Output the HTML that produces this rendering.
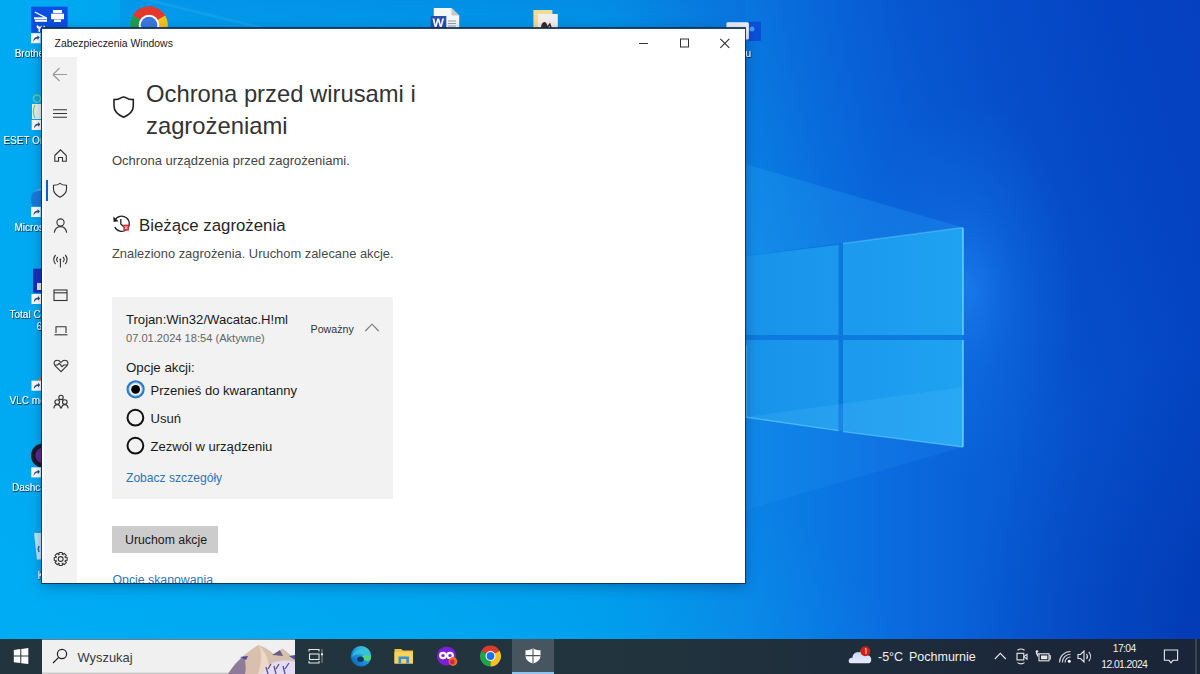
<!DOCTYPE html>
<html><head><meta charset="utf-8">
<style>
*{margin:0;padding:0;box-sizing:border-box}
html,body{width:1200px;height:674px;overflow:hidden;background:#0050c8;font-family:"Liberation Sans",sans-serif}
.abs{position:absolute}
#wall{position:absolute;left:0;top:0;width:1200px;height:674px}
#win{position:absolute;left:42px;top:28px;width:703px;height:555px;background:#fff;box-shadow:0 0 0 1px rgba(15,45,80,.85),0 3px 12px rgba(0,20,60,.35);overflow:hidden}
.t{position:absolute;white-space:nowrap;color:#000}
#taskbar{position:absolute;left:0;top:639px;width:1200px;height:35px;background:linear-gradient(90deg,#22343e 0%,#21333d 55%,#1e2d3c 72%,#1b2639 88%,#1b2539 100%)}
</style></head><body>
<svg id="wall" width="1200" height="674" viewBox="0 0 1200 674">
  <defs>
    <linearGradient id="bg" x1="0" y1="0" x2="1200" y2="0" gradientUnits="userSpaceOnUse">
      <stop offset="0" stop-color="#00aaf2"/>
      <stop offset="0.5" stop-color="#0098ea"/>
      <stop offset="0.62" stop-color="#0a84e6"/>
      <stop offset="0.75" stop-color="#0a6ade"/>
      <stop offset="0.9" stop-color="#0652cc"/>
      <stop offset="1" stop-color="#0446c2"/>
    </linearGradient>
    <radialGradient id="dark" cx="1250" cy="-180" r="660" gradientUnits="userSpaceOnUse">
      <stop offset="0" stop-color="#043cc0" stop-opacity="0.8"/>
      <stop offset="0.6" stop-color="#043cc0" stop-opacity="0.4"/>
      <stop offset="1" stop-color="#043cc0" stop-opacity="0"/>
    </radialGradient>
    <radialGradient id="glow" cx="0" cy="0" r="1" gradientUnits="userSpaceOnUse" gradientTransform="translate(968 290) scale(110 190)">
      <stop offset="0" stop-color="#2a96ff" stop-opacity="0.5"/>
      <stop offset="0.45" stop-color="#1a86f5" stop-opacity="0.22"/>
      <stop offset="1" stop-color="#1a7cf0" stop-opacity="0"/>
    </radialGradient>
    <radialGradient id="cyanbot" cx="0" cy="0" r="1" gradientUnits="userSpaceOnUse" gradientTransform="translate(300 700) scale(620 300)">
      <stop offset="0" stop-color="#00b4f6" stop-opacity="0.55"/>
      <stop offset="1" stop-color="#00b4f6" stop-opacity="0"/>
    </radialGradient>
    <radialGradient id="deepbr" cx="1260" cy="640" r="300" gradientUnits="userSpaceOnUse">
      <stop offset="0" stop-color="#0030a8" stop-opacity="0.6"/>
      <stop offset="1" stop-color="#0030a8" stop-opacity="0"/>
    </radialGradient>
    <linearGradient id="topdark" x1="0" y1="0" x2="0" y2="60" gradientUnits="userSpaceOnUse">
      <stop offset="0" stop-color="#0a60d0" stop-opacity="0.22"/>
      <stop offset="1" stop-color="#0a60d0" stop-opacity="0"/>
    </linearGradient>
    <linearGradient id="pane" x1="745" y1="0" x2="963" y2="0" gradientUnits="userSpaceOnUse">
      <stop offset="0" stop-color="#1892ea"/>
      <stop offset="1" stop-color="#1fa2f2"/>
    </linearGradient>
  </defs>
  <rect width="1200" height="674" fill="url(#bg)"/>
  <rect width="1200" height="674" fill="url(#dark)"/>
  <rect width="1200" height="674" fill="url(#glow)"/>
  <rect width="1200" height="674" fill="url(#cyanbot)"/>
  <rect x="120" y="0" width="625" height="60" fill="url(#topdark)"/>
  <rect width="1200" height="674" fill="url(#deepbr)"/>
  <!-- beams -->
  <line x1="140" y1="-2" x2="270" y2="30" stroke="#6fd0ff" stroke-opacity="0.14" stroke-width="3"/>
  <polygon points="963,227.5 745,164 745,256" fill="#30b8ff" opacity="0.2"/>
  <polygon points="963,447 745,417 745,510" fill="#38b0ff" opacity="0.12"/>
  <!-- logo panes -->
  <polygon points="745,335 963,335 963,340 745,340" fill="#0c7ade"/>
  <polygon points="838.5,244.8 843,243.5 843,431.6 838.5,430.7" fill="#0c78dc"/>
  <g fill="url(#pane)">
    <polygon points="700,262 838.5,244.8 838.5,335 700,335"/>
    <polygon points="843,243.5 963,227.5 963,335 843,335"/>
    <polygon points="700,340 838.5,340 838.5,430.7 700,411"/>
    <polygon points="843,340 963,340 963,447 843,431.6"/>
  </g>
  <polygon points="745,417 963,387 963,447 843,431.6 838.5,430.7" fill="#6ad0ff" opacity="0.14"/>
  <g fill="none" stroke="#7fe4ff" stroke-width="1.3">
    <line x1="963" y1="228" x2="963" y2="335" stroke-opacity="0.9"/>
    <line x1="963" y1="340" x2="963" y2="447" stroke-opacity="0.9"/>
    <line x1="843" y1="243.5" x2="963" y2="227.5" stroke-opacity="0.35"/>
    <line x1="843" y1="431.6" x2="963" y2="447" stroke-opacity="0.45"/>
    <line x1="745" y1="417" x2="838.5" y2="430.7" stroke-opacity="0.45"/>
    <line x1="746.5" y1="345" x2="746.5" y2="417" stroke-opacity="0.35"/>
  </g>
</svg>

<svg id="icons" class="abs" style="left:0;top:0" width="1200" height="674" viewBox="0 0 1200 674">
  <defs>
    <filter id="tsh" x="-20%" y="-20%" width="140%" height="140%"><feDropShadow dx="0.6" dy="0.8" stdDeviation="0.6" flood-color="#000" flood-opacity="0.9"/></filter>
    <g id="arrow">
      <rect x="0" y="0" width="9.5" height="10" fill="#fff"/>
      <path d="M2.3 8.8 C2.3 5.5 3.5 4 6.5 3.6 V2 L8.6 4.4 L6.5 6.8 V5.2 C4.5 5.4 3.4 6.5 2.3 8.8 Z" fill="#2a4a78"/>
    </g>
  </defs>
  <!-- Brother -->
  <rect x="31" y="6.7" width="36.6" height="26" fill="#0a4fe0"/>
  <g fill="#fff">
    <path d="M35 11.5 L46 17 L45 18 L34.5 12.5 Z"/>
    <rect x="34" y="17.3" width="13" height="2"/>
    <rect x="35" y="19.8" width="12" height="2"/>
    <rect x="53" y="10" width="9" height="3.2"/>
    <rect x="51" y="13.7" width="13" height="5.5"/>
    <rect x="54" y="19.5" width="7" height="2.5"/>
    <path d="M37 25 C36 27 37 28.5 38.5 28.8 V32 H40 V28.8 C41.5 28.5 42 27 41.5 25.5 L40 27 L38.5 26 Z"/>
    <path d="M44 25 L45.5 28 L43 28 Z"/>
  </g>
  <use href="#arrow" x="31" y="33.2"/>
  <!-- ESET -->
  <circle cx="37" cy="98.6" r="3.6" fill="none" stroke="#6acb9a" stroke-width="1.5"/>
  <rect x="32" y="104" width="10" height="15" fill="#e9f2ee"/>
  <path d="M35 105 C33 109 33 114 35 118" stroke="#6acb9a" stroke-width="1.2" fill="none"/>
  <use href="#arrow" x="31.7" y="120"/>
  <!-- Micro(soft Edge) -->
  <path d="M42 187.7 C35 188 31 194 31 200 C31 203 32 205 33 206 H42 Z" fill="#1a7ad8"/>
  <path d="M42 187.7 C38 188 35 190 33.5 193 C36 191 39 190.5 42 191 Z" fill="#3fb0e8"/>
  <use href="#arrow" x="31.2" y="207"/>
  <!-- Total Commander -->
  <rect x="33" y="268.7" width="9" height="24" fill="#1830b8"/>
  <rect x="37" y="283" width="5" height="7" fill="#f0e8e8"/>
  <use href="#arrow" x="31.5" y="294"/>
  <!-- VLC -->
  <path d="M39 378 L42 377 V381 H38.5 Z" fill="#e8701a"/>
  <use href="#arrow" x="31.5" y="380.7"/>
  <!-- Dashcam -->
  <path d="M42 443.5 C35.5 444 31 449.5 31 455.5 C31 461 34.5 465.5 39 467 H42 Z" fill="#1a1a2a"/>
  <path d="M42 448 C38.5 448.5 35.5 451.5 35.5 455.5 C35.5 459.5 38.5 462.5 42 463 Z" fill="#5a2a90"/>
  <use href="#arrow" x="31.3" y="467.4"/>
  <!-- Recycle bin -->
  <path d="M34 533 H42 V559.5 H37 Z" fill="#d8eaf4" opacity="0.9"/>
  <path d="M39 546 C38 548 38 550 39 552" stroke="#2a6ab0" stroke-width="1.6" fill="none"/>
  <!-- labels -->
  <g font-family="Liberation Sans" font-size="10px" fill="#fff" filter="url(#tsh)">
    <text x="14.7" y="56.5">Brother</text>
    <text x="3.4" y="144">ESET Online</text>
    <text x="14.5" y="230.8">Microsoft</text>
    <text x="9.5" y="317.5">Total Commander</text>
    <text x="36.5" y="330">6</text>
    <text x="9.6" y="404">VLC media</text>
    <text x="12" y="490.8">Dashcam</text>
    <text x="37.5" y="579">K</text>
    <text x="745.5" y="57">u</text>
  </g>
  <!-- Chrome top -->
  <g transform="translate(149 25)">
    <path d="M0 0 L16.2 -9.4 A18.75 18.75 0 0 0 -16.2 -9.4 Z" fill="#e2392c"/>
    <path d="M0 0 L-16.2 -9.4 A18.75 18.75 0 0 0 0 18.75 Z" fill="#1fa04a"/>
    <path d="M0 0 L0 18.75 A18.75 18.75 0 0 0 16.2 -9.4 Z" fill="#f8c11a"/>
    <circle r="10.3" fill="#fff"/>
    <circle r="8.3" fill="#3b78e0"/>
  </g>
  <!-- Word -->
  <path d="M433.8 8 H451.5 L459.2 15.5 V28 H433.8 Z" fill="#f4f6fa"/>
  <path d="M451.5 8 V15.5 H459.2 Z" fill="#c9c6c8"/>
  <g fill="#9aa0aa"><rect x="448" y="20.5" width="8" height="1"/><rect x="448" y="23" width="8" height="1"/><rect x="448" y="25.5" width="8" height="1"/></g>
  <rect x="430.7" y="16" width="15.6" height="12" fill="#2a4fb0"/>
  <path d="M432.5 18.5 H434.3 L435.6 24.5 L437.2 18.5 H439.2 L440.8 24.5 L442.2 18.5 H444 L441.8 27 H439.8 L438.2 21.3 L436.6 27 H434.6 Z" fill="#fff"/>
  <!-- folder doc -->
  <rect x="533.4" y="10" width="19" height="18" fill="#f1dc95"/>
  <rect x="538" y="14" width="19.8" height="14" fill="#f2eef0"/>
  <path d="M541 28 C541 24 542.5 22 544.5 22 C546 22 547 24 547.5 26 L550 22.5 L552 28 H550.5 L549.5 26 L547.5 28 Z" fill="#3a2a22"/>
  <!-- right icon -->
  <rect x="747.7" y="21.8" width="13.3" height="19.2" rx="1" fill="#0a4fd6"/>
  <rect x="726.4" y="22.2" width="22.5" height="17.2" rx="1.5" fill="#e8f0f8"/>
  <circle cx="752" cy="29" r="2.5" fill="#4ab0ff" opacity="0.8"/>
</svg>

<div id="win">
  <div class="abs" style="left:0;top:0;width:703px;height:1px;background:rgba(15,50,85,.9)"></div>
  <div class="t" id="title" style="left:12.5px;top:10.3px;font-size:10.45px;color:#222">Zabezpieczenia Windows</div>
  <svg class="abs" style="left:0;top:0" width="704" height="556" viewBox="42 28 704 556">
    <g stroke="#333" stroke-width="1" fill="none">
      <line x1="639" y1="43.5" x2="648" y2="43.5"/>
      <rect x="680.5" y="39" width="8" height="8"/>
      <path d="M720.3 38.8 L729.3 47.8 M729.3 38.8 L720.3 47.8" stroke-width="1.15"/>
    </g>
  </svg>
  <div class="abs" id="sidebar" style="left:2px;top:29px;width:33px;height:527px;background:#f2f2f2"></div>
  <svg class="abs" style="left:0;top:0" width="704" height="556" viewBox="42 28 704 556">
    <!-- back arrow -->
    <g stroke="#9a9a9a" stroke-width="1.1" fill="none">
      <path d="M53 74.5 H67 M53 74.5 L59.5 68 M53 74.5 L59.5 81"/>
    </g>
    <g stroke="#333" stroke-width="1.1" fill="none">
      <path d="M53 109.8 H67 M53 113.5 H67 M53 117.3 H67"/>
      <!-- home -->
      <path d="M54.8 155.5 L60.5 149.8 L66.3 155.5 V161.3 H62.5 V157.5 H58.5 V161.3 H54.8 Z"/>
      <!-- shield -->
      <path d="M60 183.3 C58 185 56 185.3 53.5 185.3 V189 C53.5 193 56.5 195.5 60 197.2 C63.5 195.5 66.5 193 66.5 189 V185.3 C64 185.3 62 185 60 183.3 Z"/>
      <!-- person -->
      <circle cx="60.5" cy="222.5" r="3.6"/>
      <path d="M54.3 232.8 C54.8 229 57.3 226.6 60.5 226.6 C63.7 226.6 66.2 229 66.7 232.8"/>
      <!-- wifi antenna -->
      <path d="M60.4 259.5 V267.5"/>
      <circle cx="60.4" cy="259.5" r="0.9" fill="#333" stroke="none"/>
      <path d="M57.8 257 A3.6 3.6 0 0 0 57.8 262 M63 257 A3.6 3.6 0 0 1 63 262"/>
      <path d="M55.6 255 A6.4 6.4 0 0 0 55.6 264 M65.2 255 A6.4 6.4 0 0 1 65.2 264"/>
      <!-- browser -->
      <rect x="54" y="290" width="13" height="10.5"/>
      <path d="M54 292.8 H67"/>
      <!-- laptop -->
      <path d="M56 333 V326.8 H66 V333"/>
      <path d="M54.5 334.8 H67.5"/>
      <!-- heart -->
      <path d="M61 371.6 L55.2 365.8 C53 363.6 54 360.3 57.2 360.3 C59 360.3 60.2 361.5 61 362.5 C61.8 361.5 63 360.3 64.8 360.3 C68 360.3 69 363.6 66.8 365.8 Z"/>
      <path d="M54.6 365 H57.5 L59.3 363.3 L62 366.7 L63.8 365 H67.5"/>
      <!-- family -->
      <circle cx="61" cy="397.5" r="2.2"/>
      <circle cx="57.2" cy="402" r="2.3"/>
      <circle cx="64.8" cy="402" r="2.3"/>
      <path d="M53.8 408.3 C54.2 405.8 55.5 404.6 57.2 404.6 C58.9 404.6 60.2 405.8 60.6 408.3"/>
      <path d="M61.4 408.3 C61.8 405.8 63.1 404.6 64.8 404.6 C66.5 404.6 67.8 405.8 68.2 408.3"/>
      <path d="M58.6 400 C59 399.5 60 399.3 61 399.3 C62 399.3 63 399.5 63.4 400"/>
    </g>
    <!-- gear -->
    <g transform="translate(60.7 559)" stroke="#333" stroke-width="1.1" fill="none">
      <path id="gearp" d="M4.47 -2.00 L6.44 -1.44 L6.44 1.44 L4.47 2.00 L4.58 1.75 L5.57 3.54 L3.54 5.57 L1.75 4.58 L2.00 4.47 L1.44 6.44 L-1.44 6.44 L-2.00 4.47 L-1.75 4.58 L-3.54 5.57 L-5.57 3.54 L-4.58 1.75 L-4.47 2.00 L-6.44 1.44 L-6.44 -1.44 L-4.47 -2.00 L-4.58 -1.75 L-5.57 -3.54 L-3.54 -5.57 L-1.75 -4.58 L-2.00 -4.47 L-1.44 -6.44 L1.44 -6.44 L2.00 -4.47 L1.75 -4.58 L3.54 -5.57 L5.57 -3.54 L4.58 -1.75 Z"/>
      <circle r="2.4"/>
    </g>
    <rect x="46" y="180" width="2" height="21" fill="#0a64c8"/>
    <!-- heading shield -->
    <path d="M114 99.6 C117.6 99.6 119.4 99 121 97.9 C122.6 96.8 124.6 96.8 126.2 97.9 C127.8 99 129.6 99.6 133.3 99.6 V106 C133.3 111.5 129.2 114.8 123.6 117.3 C118 114.8 114 111.5 114 106 Z" fill="none" stroke="#222" stroke-width="1.6"/>
    <!-- history icon -->
    <g fill="none" stroke="#222" stroke-width="1.3">
      <path d="M114.8 220.5 A7.6 7.6 0 1 1 114.8 227"/>
      <path d="M120.8 219 V224 L124 227"/>
    </g>
    <path d="M113.3 216.5 L113.6 222 L118.6 221.3 Z" fill="#222"/>
    <rect x="123.3" y="224.6" width="5.6" height="6" fill="#d13438"/>
    <path d="M124.8 226.2 L127.4 229.1 M127.4 226.2 L124.8 229.1" stroke="#fff" stroke-width="0.9"/>
  </svg>
  <div class="t" id="h1" style="left:104px;top:50px;font-size:23.8px;line-height:32px;color:#333">Ochrona przed wirusami i<br>zagrożeniami</div>
  <div class="t" id="sub1" style="left:70px;top:125px;font-size:13px;color:#454545">Ochrona urządzenia przed zagrożeniami.</div>
  <div class="t" id="h2" style="left:97px;top:187.75px;font-size:16.8px;color:#262626">Bieżące zagrożenia</div>
  <div class="t" id="sub2" style="left:70px;top:218px;font-size:12.9px;color:#4a4a4a">Znaleziono zagrożenia. Uruchom zalecane akcje.</div>
  <div class="abs" style="left:70px;top:269px;width:281px;height:202px;background:#f2f2f2"></div>
  <div class="t" id="troj" style="left:84px;top:284px;font-size:13.1px;color:#1a1a1a">Trojan:Win32/Wacatac.H!ml</div>
  <div class="t" id="date" style="left:84px;top:303.5px;font-size:11.1px;color:#666">07.01.2024 18:54 (Aktywne)</div>
  <div class="t" id="pow" style="left:268.5px;top:295px;font-size:10.7px;color:#333">Poważny</div>
  <svg class="abs" style="left:0;top:0" width="704" height="556" viewBox="42 28 704 556">
    <path d="M365.3 331 L372 324.2 L378.7 331" fill="none" stroke="#777" stroke-width="1.1"/>
    <circle cx="135.6" cy="389.3" r="8" fill="none" stroke="#2a7ac6" stroke-width="2.2"/>
    <circle cx="135.6" cy="389.3" r="6.6" fill="none" stroke="#78b8ea" stroke-width="0.8"/>
    <circle cx="135.6" cy="389.3" r="4.4" fill="#000"/>
    <circle cx="135.4" cy="417.7" r="7.9" fill="none" stroke="#111" stroke-width="2"/>
    <circle cx="135.4" cy="445.7" r="7.9" fill="none" stroke="#111" stroke-width="2"/>
  </svg>
  <div class="t" id="opc" style="left:84px;top:332px;font-size:13.3px;color:#1a1a1a">Opcje akcji:</div>
  <div class="t" id="r1" style="left:108.5px;top:355px;font-size:13.05px;color:#1a1a1a">Przenieś do kwarantanny</div>
  <div class="t" id="r2" style="left:108.5px;top:383px;font-size:13.05px;color:#1a1a1a">Usuń</div>
  <div class="t" id="r3" style="left:108.5px;top:411px;font-size:13.05px;color:#1a1a1a">Zezwól w urządzeniu</div>
  <div class="t" id="link1" style="left:84px;top:443px;font-size:12.1px;color:#2c74b8">Zobacz szczegóły</div>
  <div class="abs" style="left:70px;top:498px;width:106px;height:27px;background:#cccccc"></div>
  <div class="t" id="btn" style="left:83px;top:505px;font-size:12.3px;color:#1a1a1a">Uruchom akcje</div>
  <div class="t" id="link2" style="left:70.5px;top:544.5px;font-size:12.3px;color:#2c74b8">Opcje skanowania</div>
</div>

<div id="taskbar">
  <svg class="abs" style="left:0;top:0" width="1200" height="35" viewBox="0 639 1200 35">
    <!-- start logo -->
    <g fill="#fff">
      <polygon points="13.8,650 20.3,649.1 20.3,655.6 13.8,655.6"/>
      <polygon points="21.3,648.9 28.3,647.9 28.3,655.6 21.3,655.6"/>
      <polygon points="13.8,656.6 20.3,656.6 20.3,663.1 13.8,662.3"/>
      <polygon points="21.3,656.6 28.3,656.6 28.3,664.1 21.3,663.2"/>
    </g>
    <!-- search box -->
    <rect x="42" y="639.6" width="253" height="34.4" fill="#f0f0f0"/>
    <rect x="42" y="672.6" width="253" height="1.4" fill="#c8c8c8"/>
    <g stroke="#222" stroke-width="1.2" fill="none">
      <circle cx="62" cy="654" r="4.6"/>
      <path d="M58.7 657.3 L53 663"/>
    </g>
    <!-- mountain art -->
    <g>
      <path d="M228 674 C236 662 246 652 258.7 645 C265 647 272 652 276 656 L282 648.3 C288 652 292 657 295 660 V674 Z" fill="#d9bfae"/>
      <path d="M228 674 C233 666 238 660 244 656 C246 664 246 670 245 674 Z" fill="#8e7b98"/>
      <path d="M240 657 L248 656 L246 660 Z" fill="#4a4aa0"/>
      <path d="M272 655 L280 650 L283 656 Z" fill="#6a5f80"/>
      <path d="M289 656 L295 655 V660 Z" fill="#4a55a8"/>
      <path d="M258.7 645 C262 652 262 662 258 674 H268 C270 664 268 654 258.7 645 Z" fill="#ecd7c8"/>
      <path d="M262 674 C266 666 272 662 280 661 C286 660 292 661 295 662 V674 Z" fill="#e4ddf2"/>
      <g stroke="#5a4e94" stroke-width="1.3" fill="none">
        <path d="M268 674 L266 667 M268 669 L271 664"/>
        <path d="M276 674 L274 666 M276 669 L279 664"/>
        <path d="M285 674 L283 666 M285 669 L289 663"/>
      </g>
    </g>
    <!-- task view -->
    <g stroke="#e6e6e6" stroke-width="1.1" fill="none">
      <path d="M309 651.5 V649.5 H319 V651.5"/>
      <rect x="309.5" y="654" width="9.5" height="5.5"/>
      <path d="M309 661 V663 H319 V661"/>
      <path d="M322 649 V663" stroke="#888"/>
    </g>
    <circle cx="322" cy="654.3" r="1.1" fill="#fff"/>
    <!-- edge -->
    <defs>
      <linearGradient id="edgeg" x1="0" y1="1" x2="1" y2="0">
        <stop offset="0" stop-color="#0c59a4"/>
        <stop offset="0.45" stop-color="#1b8ee0"/>
        <stop offset="0.75" stop-color="#33bde0"/>
        <stop offset="1" stop-color="#5ddb6a"/>
      </linearGradient>
      <radialGradient id="chromeg" cx="0.5" cy="0.5" r="0.5"><stop offset="0" stop-color="#fff"/></radialGradient>
    </defs>
    <circle cx="361" cy="656.3" r="10.3" fill="url(#edgeg)"/>
    <path d="M352 657 C353 651 358 648.5 362.5 649 C367 649.5 370.5 652.5 371 656.5 C371.2 659 369.5 660.5 367 660.5 C364.5 660.5 362 659.5 362 657.5 C362 656 363 655.5 364 655.5 C361 653.5 355 653.8 352 657 Z" fill="#36c2d8" opacity="0.85"/>
    <path d="M364 655.5 C366.5 655 370 656 371 657.5 C370.5 660 368.5 661 366.5 660.8 C364 660.5 362.5 659 362.5 657.5 C362.5 656.5 363 655.8 364 655.5 Z" fill="#54d66e"/>
    <ellipse cx="360.5" cy="659.2" rx="3.3" ry="2.6" fill="#0b3564"/>
    <!-- explorer -->
    <path d="M394.5 649 H401 L403 650.5 H413 V663.5 H394.5 Z" fill="#f0c241"/>
    <rect x="394.5" y="652" width="18.5" height="11.5" fill="#f8d35a"/>
    <path d="M398.5 663.5 V656.5 H409 V663.5 H406.3 V659 H401.2 V663.5 Z" fill="#3d8ed6"/>
    <!-- purple app -->
    <circle cx="446.5" cy="656" r="9.6" fill="#7d1fd6"/>
    <g stroke="#fff" stroke-width="2.2" fill="none">
      <ellipse cx="443" cy="655.5" rx="2.8" ry="2.6"/>
      <ellipse cx="450" cy="655.5" rx="2.8" ry="2.6"/>
    </g>
    <circle cx="453" cy="661.5" r="4.4" fill="#f06a28"/>
    <circle cx="452.3" cy="662" r="2.4" fill="#c42a52"/>
    <!-- chrome -->
    <g transform="translate(490.5 656)">
      <path d="M0 0 L9.1 -5.25 A10.5 10.5 0 0 0 -9.1 -5.25 Z" fill="#db3a2d"/>
      <path d="M0 0 L-9.1 -5.25 A10.5 10.5 0 0 0 0 10.5 Z" fill="#21a347"/>
      <path d="M0 0 L0 10.5 A10.5 10.5 0 0 0 9.1 -5.25 Z" fill="#f6c21b"/>
      <circle r="5" fill="#fff"/>
      <circle r="3.9" fill="#1a73e8"/>
    </g>
    <!-- defender active -->
    <rect x="512" y="639" width="42" height="35" fill="#46555f"/>
    <rect x="512" y="672" width="42" height="2" fill="#8fc4ef"/>
    <path d="M533 648.2 C531 649.6 528.5 650.3 525.5 650.3 V655.5 C525.5 659.5 528.5 662 533 663.6 C537.5 662 540.5 659.5 540.5 655.5 V650.3 C537.5 650.3 535 649.6 533 648.2 Z" fill="#fff"/>
    <path d="M533 648.5 V663.5 M525.5 655.6 H540.5" stroke="#46555f" stroke-width="1.1"/>
    <!-- weather cloud -->
    <defs>
      <linearGradient id="cloudg" x1="0" y1="0" x2="0" y2="1">
        <stop offset="0" stop-color="#c8d6f4"/><stop offset="1" stop-color="#e8ecfa"/>
      </linearGradient>
    </defs>
    <path d="M851 663.3 C847.5 663.3 848 657.5 852.5 657.8 C852.5 653.5 856 651.5 859.5 652.3 C862 649.5 868 650.5 868 655.5 C872 655.5 872.5 663.3 868.5 663.3 Z" fill="url(#cloudg)"/>
    <circle cx="865.3" cy="651.3" r="5" fill="#c8201a"/>
    <path d="M864.8 649 L866 648.3 V654" stroke="#ffd0b0" stroke-width="1" fill="none"/>
    <!-- tray -->
    <g stroke="#e8e8e8" stroke-width="1.1" fill="none">
      <path d="M994.8 659 L1000.3 653.4 L1005.8 659"/>
      <!-- meet now -->
      <rect x="1017" y="653.3" width="6.8" height="6.6"/>
      <path d="M1023.8 656.6 L1027 654.3 V659.1 L1023.8 656.6"/>
      <path d="M1017.5 650.3 C1019.5 648.8 1022.5 648.8 1024.5 650.3"/>
      <path d="M1017.5 662.6 C1019.5 664 1022.5 664 1024.5 662.6"/>
      <!-- battery -->
      <rect x="1039" y="653.8" width="10" height="7"/>
      <path d="M1049 655.8 H1050.3 V659 H1049"/>
      <path d="M1036.5 651 V654 H1039 M1037.5 654 V656.5"/>
      <!-- volume -->
      <path d="M1078 654.5 H1080.5 L1084 651 V662 L1080.5 658.5 H1078 Z"/>
      <path d="M1086.5 654 C1087.7 655.5 1087.7 657.5 1086.5 659"/>
      <path d="M1088.8 651.8 C1091 654.5 1091 658.5 1088.8 661.2"/>
    </g>
    <rect x="1041" y="655.5" width="6.3" height="3.7" fill="#e8e8e8"/>
    <circle cx="1037" cy="651.5" r="1.3" fill="#e8e8e8"/>
    <!-- wifi -->
    <g stroke="#d8d8d8" stroke-width="1.1" fill="none">
      <path d="M1059.5 662.5 A11 11 0 0 1 1070.5 651.5"/>
      <path d="M1062.3 662.5 A8.2 8.2 0 0 1 1070.5 654.3"/>
      <path d="M1065 662.5 A5.5 5.5 0 0 1 1070.5 657"/>
    </g>
    <circle cx="1069.3" cy="661.3" r="1.5" fill="#fff"/>
    <!-- notification -->
    <path d="M1164.4 650 H1177.6 V660.3 H1173 L1171 662.8 L1169 660.3 H1164.4 Z" fill="none" stroke="#e8e8e8" stroke-width="1.1"/>
    <rect x="1195.5" y="639" width="1" height="35" fill="#5b6575"/>
  </svg>
  <div class="t" id="wysz" style="left:77.5px;top:11px;font-size:12.9px;color:#3a3a3a">Wyszukaj</div>
  <div class="t" id="temp" style="left:878px;top:11px;font-size:12.5px;color:#f0f0f0">-5°C</div><div class="t" id="temp2" style="left:909px;top:11px;font-size:12.5px;color:#f0f0f0">Pochmurnie</div>
  <div class="t" id="time" style="left:1112.8px;top:4px;font-size:10.3px;letter-spacing:-0.6px;color:#f0f0f0">17:04</div>
  <div class="t" id="dt" style="left:1101.3px;top:20px;font-size:10.4px;letter-spacing:-0.6px;color:#f0f0f0">12.01.2024</div>
</div>
</body></html>
